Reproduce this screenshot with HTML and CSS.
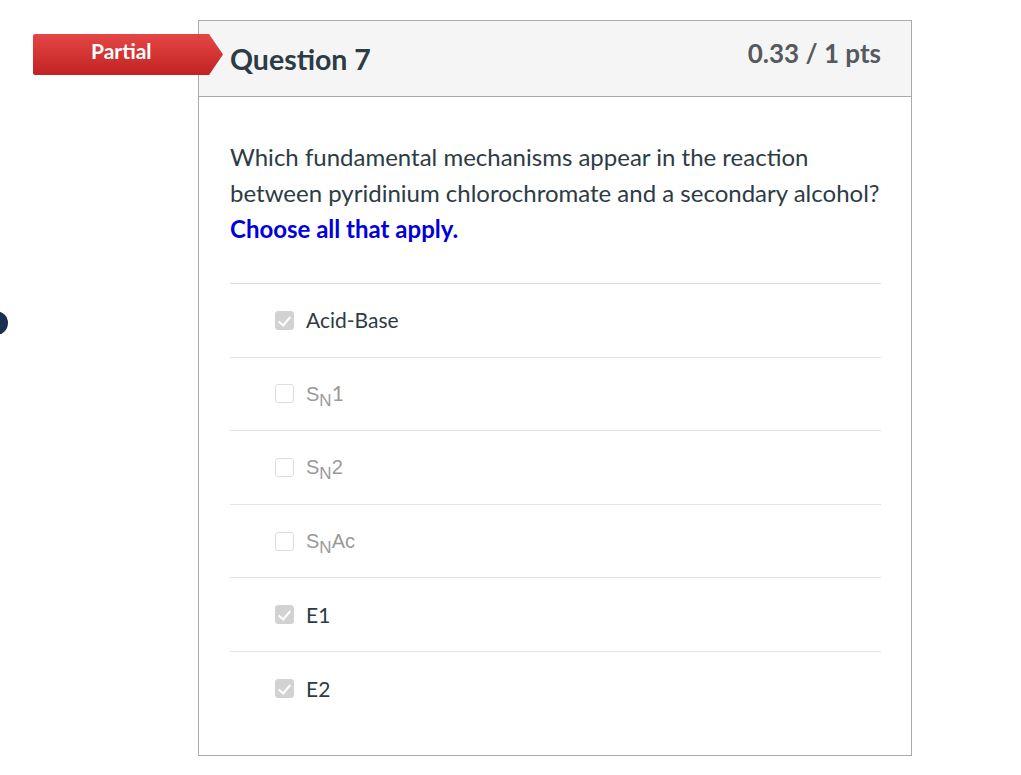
FILE: index.html
```html
<!DOCTYPE html>
<html>
<head>
<meta charset="utf-8">
<link rel="stylesheet" href="styles.css">
</head>
<body>
<div class="page">
  <div class="nav-dot"></div>
  <div class="question">
    <div class="badge">Partial</div>
    <div class="q-header">
      <h2 class="q-title">Question 7</h2>
      <div class="q-points">0.33 / 1 pts</div>
    </div>
    <div class="q-body">
      <p class="q-text">Which fundamental mechanisms appear in the reaction between pyridinium chlorochromate and a secondary alcohol? <strong class="q-note">Choose all that apply.</strong></p>
      <ul class="answers">
        <li class="answer selected"><span class="box checked"></span><span class="label">Acid-Base</span></li>
        <li class="answer"><span class="box"></span><span class="label"><span class="sym">S<sub>N</sub></span>1</span></li>
        <li class="answer"><span class="box"></span><span class="label sym">S<sub>N</sub>2</span></li>
        <li class="answer"><span class="box"></span><span class="label sym">S<sub>N</sub>Ac</span></li>
        <li class="answer selected"><span class="box checked"></span><span class="label">E1</span></li>
        <li class="answer selected"><span class="box checked"></span><span class="label">E2</span></li>
      </ul>
    </div>
  </div>
</div>
</body>
</html>
```
FILE: styles.css
```css
* { box-sizing: border-box; }
html, body { margin: 0; padding: 0; background: #fff; }
body { font-family: Lato, "Open Sans", "Liberation Sans", sans-serif; color: #2d3b45; }
.page { position: relative; width: 1021px; height: 775px; padding: 20px 0 0 198px; }
.nav-dot {
  position: absolute; left: -16px; top: 311px; width: 24px; height: 24px;
  border-radius: 50%; background: #1b2f50;
}
.question {
  position: relative; width: 714px; height: 736px;
  border: 1px solid #aaaaaa; background: #fff;
}
.badge {
  position: absolute; left: -166px; top: 13px; width: 190px; height: 41px;
  background: linear-gradient(#e44646, #c22222);
  clip-path: polygon(0 0, 176px 0, 190px 50%, 176px 100%, 0 100%);
  color: #fff; font-weight: 700; font-size: 21px;
  padding: 4px 0 0 58px; border-radius: 2px;
}
.q-header {
  display: flex; justify-content: space-between; align-items: flex-start;
  height: 76px; background: #f5f5f5; border-bottom: 1px solid #aaaaaa;
  padding: 0 30px 0 31px;
}
.q-title { margin: 0; padding-top: 21px; font-size: 28.5px; font-weight: 700; color: #2d3b45; line-height: 34px; }
.q-points { padding-top: 15px; font-size: 26px; font-weight: 700; color: #555a5e; line-height: 34px; }
.q-body { padding: 42px 30px 0 31px; }
.q-text { margin: 0; font-size: 24px; line-height: 36px; color: #2d3b45; }
.q-note { color: #0000dd; font-weight: 700; }
.answers { list-style: none; margin: 36px 0 0; padding: 0; border-top: 1px solid #dddddd; }
.answer {
  display: flex; align-items: center; height: 73.6px;
  border-bottom: 1px solid #e4e4e4; padding-left: 45px;
  font-size: 21px; color: #9a9a9a;
}
.answer:last-child { border-bottom: none; }
.answer.selected { color: #2d3b45; }
.box {
  width: 19px; height: 19px; border-radius: 3px; border: 1px solid #dedede;
  background: #fff; margin-right: 12px; position: relative; flex: none;
}
.box.checked { background: #d2d2d2; border-color: #d2d2d2; }
.box.checked::after {
  content: ""; position: absolute; left: 5px; top: 2px; width: 5px; height: 10px;
  border: solid #fff; border-width: 0 2.5px 2.5px 0; transform: rotate(40deg);
}
.label { line-height: 24px; }
.sym { font-family: "Liberation Sans", Arial, sans-serif; font-size: 20px; }
.label sub { font-size: 17px; vertical-align: -5px; line-height: 0; }
```
